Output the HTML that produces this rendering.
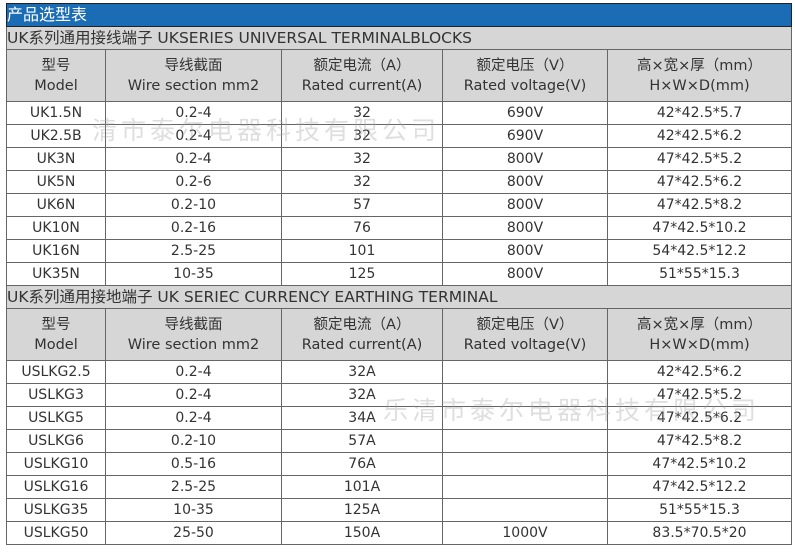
<!DOCTYPE html>
<html><head><meta charset="utf-8"><style>
body{margin:0;width:795px;height:556px;background:#fff;position:relative;overflow:hidden;font-family:"DejaVu Sans","Noto Sans CJK SC",sans-serif;}
table{position:absolute;left:6px;top:3px;border-collapse:collapse;table-layout:fixed;width:785px;color:#333;font-size:14px;}
td{border:1px solid #666;text-align:center;padding:0;height:22px;line-height:20px;white-space:nowrap;overflow:hidden;}
tr.t td{background:#1a6cb4;color:#fff;text-align:left;height:22px;border-color:#222;font-size:16px;}
tr.s td{background:#d6d6d6;text-align:left;height:22px;font-size:15.5px;}
tr.h td{background:#d6d6d6;height:51px;line-height:20px;font-size:14.5px;}
.wm{position:absolute;color:rgba(160,160,160,.35);font-size:25px;letter-spacing:4px;font-family:"Noto Sans CJK SC",sans-serif;}
</style></head><body>
<table>
<colgroup><col style="width:99px"><col style="width:176px"><col style="width:161px"><col style="width:165px"><col style="width:184px"></colgroup>
<tr class="t"><td colspan="5">产品选型表</td></tr>
<tr class="s"><td colspan="5">UK系列通用接线端子 UKSERIES UNIVERSAL TERMINALBLOCKS</td></tr>
<tr class="h"><td>型号<br>Model</td><td>导线截面<br>Wire section mm2</td><td>额定电流（A）<br>Rated current(A)</td><td>额定电压（V）<br>Rated voltage(V)</td><td>高×宽×厚（mm）<br>H×W×D(mm)</td></tr>
<tr><td>UK1.5N</td><td>0.2-4</td><td>32</td><td>690V</td><td>42*42.5*5.7</td></tr>
<tr><td>UK2.5B</td><td>0.2-4</td><td>32</td><td>690V</td><td>42*42.5*6.2</td></tr>
<tr><td>UK3N</td><td>0.2-4</td><td>32</td><td>800V</td><td>47*42.5*5.2</td></tr>
<tr><td>UK5N</td><td>0.2-6</td><td>32</td><td>800V</td><td>47*42.5*6.2</td></tr>
<tr><td>UK6N</td><td>0.2-10</td><td>57</td><td>800V</td><td>47*42.5*8.2</td></tr>
<tr><td>UK10N</td><td>0.2-16</td><td>76</td><td>800V</td><td>47*42.5*10.2</td></tr>
<tr><td>UK16N</td><td>2.5-25</td><td>101</td><td>800V</td><td>54*42.5*12.2</td></tr>
<tr><td>UK35N</td><td>10-35</td><td>125</td><td>800V</td><td>51*55*15.3</td></tr>
<tr class="s"><td colspan="5">UK系列通用接地端子 UK SERIEC CURRENCY EARTHING TERMINAL</td></tr>
<tr class="h"><td>型号<br>Model</td><td>导线截面<br>Wire section mm2</td><td>额定电流（A）<br>Rated current(A)</td><td>额定电压（V）<br>Rated voltage(V)</td><td>高×宽×厚（mm）<br>H×W×D(mm)</td></tr>
<tr><td>USLKG2.5</td><td>0.2-4</td><td>32A</td><td></td><td>42*42.5*6.2</td></tr>
<tr><td>USLKG3</td><td>0.2-4</td><td>32A</td><td></td><td>47*42.5*5.2</td></tr>
<tr><td>USLKG5</td><td>0.2-4</td><td>34A</td><td></td><td>47*42.5*6.2</td></tr>
<tr><td>USLKG6</td><td>0.2-10</td><td>57A</td><td></td><td>47*42.5*8.2</td></tr>
<tr><td>USLKG10</td><td>0.5-16</td><td>76A</td><td></td><td>47*42.5*10.2</td></tr>
<tr><td>USLKG16</td><td>2.5-25</td><td>101A</td><td></td><td>47*42.5*12.2</td></tr>
<tr><td>USLKG35</td><td>10-35</td><td>125A</td><td></td><td>51*55*15.3</td></tr>
<tr><td>USLKG50</td><td>25-50</td><td>150A</td><td>1000V</td><td>83.5*70.5*20</td></tr>
</table>
<div class="wm" style="left:92px;top:111px">清市泰尔电器科技有限公司</div>
<div class="wm" style="left:383px;top:391px">乐清市泰尔电器科技有限公司</div>
</body></html>
